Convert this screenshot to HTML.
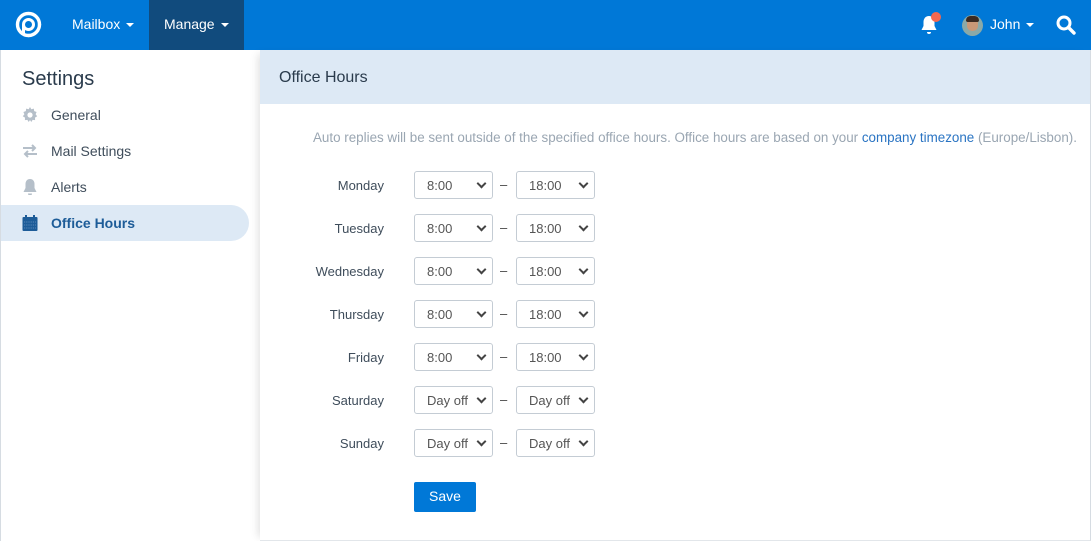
<!DOCTYPE html>
<html><head><style>
*{box-sizing:border-box;margin:0;padding:0}
body{width:1091px;height:541px;overflow:hidden;background:#fff;font-family:"Liberation Sans",sans-serif;position:relative}
.nav{position:absolute;left:0;top:0;width:1091px;height:50px;background:#0078d7;color:#fff;font-size:14px}
.nav .it{position:absolute;top:0;height:50px;line-height:48px}
.caret{display:inline-block;width:0;height:0;border-left:4px solid transparent;border-right:4px solid transparent;border-top:4px solid #fff;vertical-align:middle;margin-left:6px}
.side{position:absolute;left:0;top:50px;width:260px;height:491px;border-left:1px solid #d6dce2}
.side h2{position:absolute;left:21px;top:18px;font-size:20px;font-weight:normal;color:#2a3b4c}
.si{position:absolute;left:0;width:248px;height:36px;line-height:36px;font-size:14px;color:#3f4d5b}
.si span{position:absolute;left:50px}
.si svg{position:absolute;left:21px;top:10px}
.si.act{background:#dde9f5;border-radius:0 18px 18px 0;color:#1d5c98;font-weight:bold}
.main{position:absolute;left:260px;top:50px;width:831px;height:491px;border-right:1px solid #d6dce2;border-bottom:1px solid #e2e6ea;box-shadow:-6px 0 8px -4px rgba(0,0,0,.12)}
.hd{height:54px;background:#dde9f5;font-size:16px;color:#2a3b4c;line-height:55px;padding-left:19px}
.note{position:absolute;left:53px;top:80px;font-size:13.4px;color:#9aa6b2}
.note a{color:#2a74c3;text-decoration:none}
.row{position:absolute;left:0;width:600px;height:28px}
.row .l{position:absolute;right:476px;top:7px;font-size:13px;color:#3f4d5b}
.sel{position:absolute;top:0;width:79px;height:28px;border:1px solid #c4ccd4;border-radius:3px;font-size:13px;color:#555;line-height:27px;padding-left:12px}
.sel:after{content:"";position:absolute;right:7px;top:8px;width:5px;height:5px;border-right:2px solid #444;border-bottom:2px solid #444;transform:rotate(45deg)}
.dash{position:absolute;left:240px;top:6px;font-size:13px;color:#444}
.btn{position:absolute;left:154px;top:432px;width:62px;height:30px;background:#0078d7;color:#fff;font-size:14px;text-align:center;line-height:29px;border-radius:2px}
</style></head><body>
<div class="nav">
<svg style="position:absolute;left:15px;top:11px" width="27" height="27" viewBox="0 0 27 27"><path d="M13.5 24.5A11 11 0 1 1 24.5 13.5" fill="none" stroke="#fff" stroke-width="3.4" stroke-linecap="round"/><path d="M24.5 13.5C24.5 19 20 24.5 13.5 24.5" fill="none" stroke="#fff" stroke-width="3.4"/><circle cx="13.5" cy="13.5" r="5" fill="none" stroke="#fff" stroke-width="3"/><path d="M8.5 13.5v10" stroke="#fff" stroke-width="3"/></svg>
<div class="it" style="left:72px">Mailbox<span class="caret"></span></div>
<div class="it" style="left:149px;width:95px;background:#114b7d;padding-left:15px">Manage<span class="caret"></span></div>
<svg style="position:absolute;left:919px;top:15px" width="20" height="20" viewBox="0 0 20 20"><path d="M10 1c-3.5 0-5.5 2.8-5.5 6v4L2.5 15h15l-2-4V7c0-3.2-2-6-5.5-6z" fill="#fff"/><path d="M8 17a2 2 0 0 0 4 0z" fill="#fff"/></svg>
<div style="position:absolute;left:931px;top:12px;width:10px;height:10px;border-radius:50%;background:#f5684f"></div>
<div style="position:absolute;left:962px;top:15px;width:21px;height:21px;border-radius:50%;background:#8aa9a8;overflow:hidden"><div style="position:absolute;left:5px;top:3px;width:11px;height:13px;border-radius:5px;background:#c99877"></div><div style="position:absolute;left:4px;top:1px;width:13px;height:6px;border-radius:5px 5px 2px 2px;background:#3a2a22"></div></div>
<div class="it" style="left:990px">John<span class="caret"></span></div>
<svg style="position:absolute;left:1056px;top:15px" width="20" height="20" viewBox="0 0 20 20"><circle cx="8" cy="8" r="6" fill="none" stroke="#fff" stroke-width="3"/><path d="M12.5 12.5L18 18" stroke="#fff" stroke-width="3.4" stroke-linecap="round"/></svg>
</div>
<div class="side">
<h2>Settings</h2>
<div class="si" style="top:47px"><svg width="16" height="16" viewBox="0 0 16 16"><path d="M8 0l1.3 2.2 2.5-.6.4 2.5 2.4.9-1 2.3 1.6 2-2.2 1.3.1 2.5-2.5-.2L9.3 15 8 13l-1.3 2-1.3-2.1-2.5.2.1-2.5L.8 9.3l1.6-2-1-2.3 2.4-.9.4-2.5 2.5.6z" fill="#b5bfc9"/><circle cx="8" cy="8" r="2.6" fill="#fff"/></svg><span>General</span></div>
<div class="si" style="top:83px"><svg width="16" height="16" viewBox="0 0 16 16"><path d="M1 5h12M10 2l3 3-3 3M15 11H3M6 8l-3 3 3 3" fill="none" stroke="#b5bfc9" stroke-width="2"/></svg><span>Mail Settings</span></div>
<div class="si" style="top:119px"><svg width="16" height="16" viewBox="0 0 16 16"><path d="M8 0c-3 0-4.5 2.4-4.5 5v4L1.5 13h13l-2-4V5C12.5 2.4 11 0 8 0z" fill="#b5bfc9"/><path d="M6 14.5a2 2 0 0 0 4 0z" fill="#b5bfc9"/></svg><span>Alerts</span></div>
<div class="si act" style="top:155px"><svg width="16" height="16" viewBox="0 0 16 16"><rect x="0.5" y="2" width="15" height="14" rx="1" fill="#1d5c98"/><rect x="3" y="0" width="2" height="4" fill="#1d5c98"/><rect x="11" y="0" width="2" height="4" fill="#1d5c98"/><path d="M2 7h12M2 10h12M2 13h12" stroke="#6f98c2" stroke-width="0.8" stroke-dasharray="1.2 1"/></svg><span>Office Hours</span></div>
</div>
<div class="main">
<div class="hd">Office Hours</div>
<div class="note">Auto replies will be sent outside of the specified office hours. Office hours are based on your <a>company timezone</a> (Europe/Lisbon).</div>
<div class="row" style="top:121px"><div class="l">Monday</div><div class="sel" style="left:154px">8:00</div><div class="dash">–</div><div class="sel" style="left:256px">18:00</div></div>
<div class="row" style="top:164px"><div class="l">Tuesday</div><div class="sel" style="left:154px">8:00</div><div class="dash">–</div><div class="sel" style="left:256px">18:00</div></div>
<div class="row" style="top:207px"><div class="l">Wednesday</div><div class="sel" style="left:154px">8:00</div><div class="dash">–</div><div class="sel" style="left:256px">18:00</div></div>
<div class="row" style="top:250px"><div class="l">Thursday</div><div class="sel" style="left:154px">8:00</div><div class="dash">–</div><div class="sel" style="left:256px">18:00</div></div>
<div class="row" style="top:293px"><div class="l">Friday</div><div class="sel" style="left:154px">8:00</div><div class="dash">–</div><div class="sel" style="left:256px">18:00</div></div>
<div class="row" style="top:336px"><div class="l">Saturday</div><div class="sel" style="left:154px">Day off</div><div class="dash">–</div><div class="sel" style="left:256px">Day off</div></div>
<div class="row" style="top:379px"><div class="l">Sunday</div><div class="sel" style="left:154px">Day off</div><div class="dash">–</div><div class="sel" style="left:256px">Day off</div></div>
<div class="btn">Save</div>
</div>
</body></html>
